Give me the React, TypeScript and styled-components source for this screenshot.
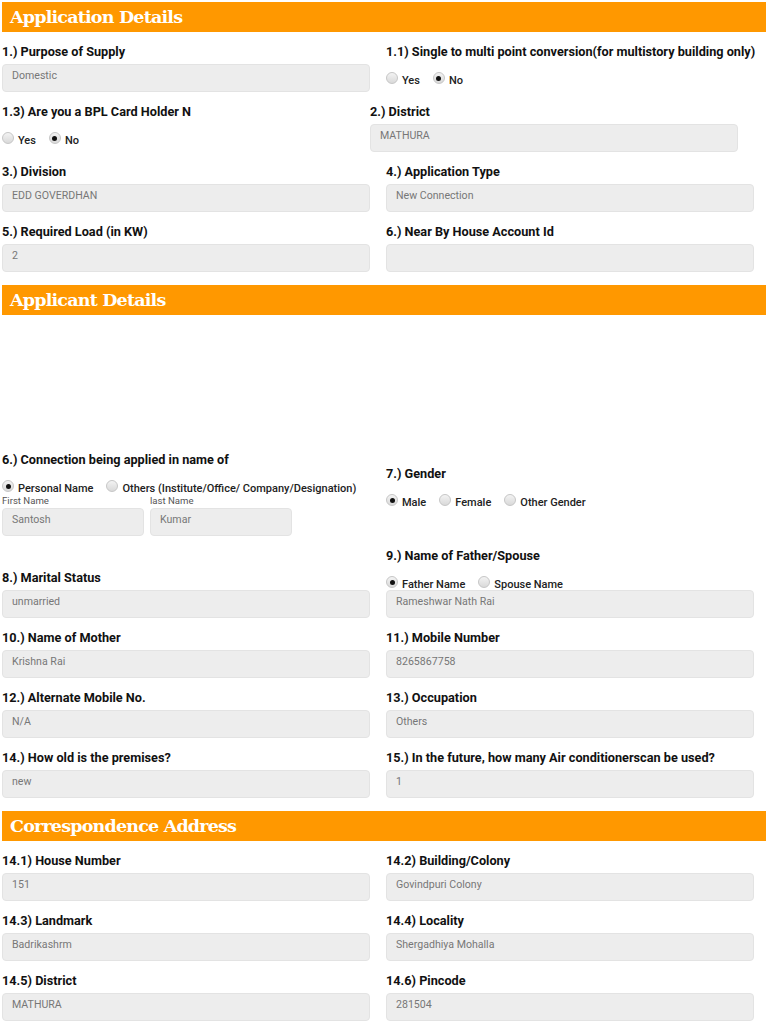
import React from "react";
import styled, { createGlobalStyle } from "styled-components";

const GlobalStyle = createGlobalStyle`
  html, body { margin: 0; padding: 0; background: #ffffff; }
  body { font-family: Roboto, "Liberation Sans", Arial, sans-serif; }
  * { box-sizing: border-box; }
`;

const Page = styled.div`
  width: 768px;
  padding: 2px 2px 0;
`;

const SectionHeader = styled.h2<{ $first?: boolean }>`
  margin: ${(p) => (p.$first ? 0 : 13)}px 0 0;
  height: 30px;
  padding-left: 8px;
  background: #ff9800;
  color: #ffffff;
  font-family: "DejaVu Serif", "Liberation Serif", serif;
  font-weight: 700;
  font-size: 17.5px;
  letter-spacing: -0.8px;
  line-height: 31px;
`;

const Spacer = styled.div<{ $h: number }>`
  height: ${(p) => p.$h}px;
`;

const Row = styled.div<{ $align?: string }>`
  display: grid;
  grid-template-columns: 368px 368px;
  column-gap: 16px;
  align-items: ${(p) => p.$align || "start"};
`;

const Cell = styled.div<{ $top?: number; $shift?: number }>`
  padding-top: ${(p) => (p.$top ?? 12)}px;
  margin: 0 ${(p) => p.$shift || 0}px 0 ${(p) => -(p.$shift || 0)}px;
`;

const Label = styled.div`
  font-size: 12.7px;
  font-weight: 700;
  line-height: 15px;
  color: #111111;
  white-space: nowrap;
`;

const Field = styled.input<{ $gap?: number }>`
  display: block;
  width: 100%;
  height: 28px;
  margin: ${(p) => (p.$gap ?? 5)}px 0 0;
  padding: 0 0 5px 9px;
  background: #ededed;
  border: 1px solid #e3e3e3;
  border-radius: 4px;
  font-family: Roboto, "Liberation Sans", sans-serif;
  font-size: 10.6px;
  color: #777777;
  outline: none;
`;

const RadioRow = styled.div`
  display: flex;
  align-items: center;
  height: 16px;
  margin-top: 11px;
`;

const RadioOption = styled.label`
  display: flex;
  align-items: center;
  gap: 4px;
  margin-right: 13px;
  font-size: 11px;
  font-weight: 500;
  color: #222222;
  white-space: nowrap;
`;

const RadioText = styled.span`
  position: relative;
  top: 2px;
`;

const Dot = styled.span<{ $checked?: boolean }>`
  position: relative;
  width: 12px;
  height: 12px;
  border-radius: 50%;
  border: 1px solid #c6c6c6;
  background: linear-gradient(#f3f3f3, #d9d9d9);
  &::after {
    content: "";
    display: ${(p) => (p.$checked ? "block" : "none")};
    position: absolute;
    left: 2.5px;
    top: 2.5px;
    width: 5px;
    height: 5px;
    border-radius: 50%;
    background: #111111;
  }
`;

const NameGrid = styled.div`
  display: grid;
  grid-template-columns: 142px 142px;
  column-gap: 6px;
  margin-top: 1px;
`;

const SubLabel = styled.div`
  font-size: 9.6px;
  line-height: 12px;
  color: #555555;
`;

type Opt = { text: string; checked?: boolean };

const Radios = ({ options }: { options: Opt[] }) => (
  <RadioRow>
    {options.map((o) => (
      <RadioOption key={o.text}>
        <Dot $checked={o.checked} />
        <RadioText>{o.text}</RadioText>
      </RadioOption>
    ))}
  </RadioRow>
);

const TextField = ({ label, value }: { label: string; value: string }) => (
  <Cell>
    <Label>{label}</Label>
    <Field readOnly value={value} />
  </Cell>
);

const Pair = ({ a, b }: { a: [string, string]; b: [string, string] }) => (
  <Row>
    <TextField label={a[0]} value={a[1]} />
    <TextField label={b[0]} value={b[1]} />
  </Row>
);

export default function App() {
  return (
    <Page>
      <GlobalStyle />
      <SectionHeader $first>Application Details</SectionHeader>
      <Row>
        <TextField label="1.) Purpose of Supply" value="Domestic" />
        <Cell>
          <Label>1.1) Single to multi point conversion(for multistory building only)</Label>
          <Radios options={[{ text: "Yes" }, { text: "No", checked: true }]} />
        </Cell>
      </Row>
      <Row>
        <Cell>
          <Label>1.3) Are you a BPL Card Holder N</Label>
          <Radios options={[{ text: "Yes" }, { text: "No", checked: true }]} />
        </Cell>
        <Cell $shift={16}>
          <Label>2.) District</Label>
          <Field readOnly value="MATHURA" />
        </Cell>
      </Row>
      <Pair a={["3.) Division", "EDD GOVERDHAN"]} b={["4.) Application Type", "New Connection"]} />
      <Pair a={["5.) Required Load (in KW)", "2"]} b={["6.) Near By House Account Id", ""]} />

      <SectionHeader>Applicant Details</SectionHeader>
      <Spacer $h={125} />
      <Row>
        <Cell>
          <Label>6.) Connection being applied in name of</Label>
          <Radios
            options={[
              { text: "Personal Name", checked: true },
              { text: "Others (Institute/Office/ Company/Designation)" },
            ]}
          />
          <NameGrid>
            <div>
              <SubLabel>First Name</SubLabel>
              <Field readOnly value="Santosh" $gap={1} />
            </div>
            <div>
              <SubLabel>last Name</SubLabel>
              <Field readOnly value="Kumar" $gap={1} />
            </div>
          </NameGrid>
        </Cell>
        <Cell $top={26}>
          <Label>7.) Gender</Label>
          <Radios
            options={[
              { text: "Male", checked: true },
              { text: "Female" },
              { text: "Other Gender" },
            ]}
          />
        </Cell>
      </Row>
      <Row $align="end">
        <TextField label="8.) Marital Status" value="unmarried" />
        <Cell>
          <Label>9.) Name of Father/Spouse</Label>
          <Radios options={[{ text: "Father Name", checked: true }, { text: "Spouse Name" }]} />
          <Field readOnly value="Rameshwar Nath Rai" $gap={0} />
        </Cell>
      </Row>
      <Pair a={["10.) Name of Mother", "Krishna Rai"]} b={["11.) Mobile Number", "8265867758"]} />
      <Pair a={["12.) Alternate Mobile No.", "N/A"]} b={["13.) Occupation", "Others"]} />
      <Pair
        a={["14.) How old is the premises?", "new"]}
        b={["15.) In the future, how many Air conditionerscan be used?", "1"]}
      />

      <SectionHeader>Correspondence Address</SectionHeader>
      <Pair a={["14.1) House Number", "151"]} b={["14.2) Building/Colony", "Govindpuri Colony"]} />
      <Pair a={["14.3) Landmark", "Badrikashrm"]} b={["14.4) Locality", "Shergadhiya Mohalla"]} />
      <Pair a={["14.5) District", "MATHURA"]} b={["14.6) Pincode", "281504"]} />
    </Page>
  );
}
